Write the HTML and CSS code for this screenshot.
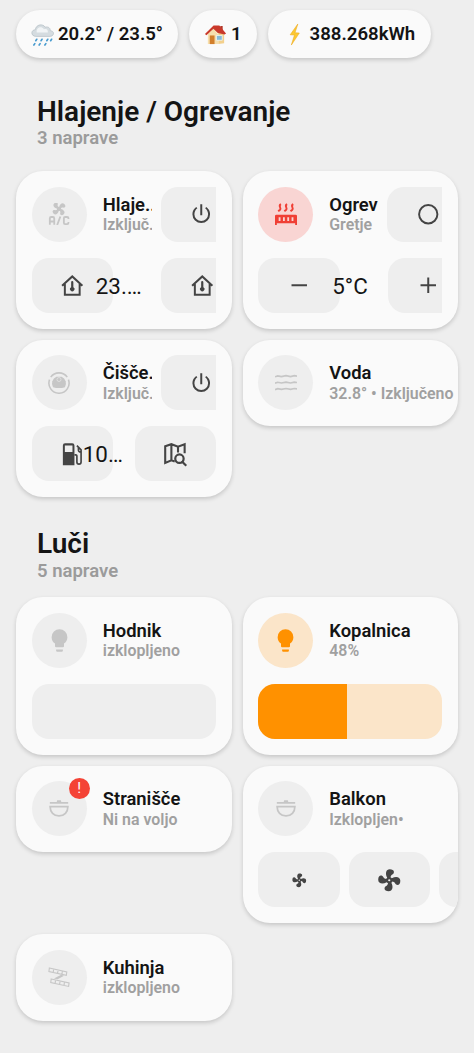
FILE: index.html
```html
<!DOCTYPE html>
<html lang="sl">
<head>
<meta charset="utf-8">
<title>Dom</title>
<link rel="stylesheet" href="styles.css">
</head>
<body>
<svg class="defs" aria-hidden="true">
  <symbol id="power" viewBox="0 0 24 24"><path d="M16.56,5.44L15.51,6.59C16.99,7.74 18.2,9.73 18.2,12A6.2,6.2 0 0,1 12,18.2A6.2,6.2 0 0,1 5.8,12C5.8,9.73 7,7.74 8.48,6.58L7.44,5.44C5.36,6.88 4,9.28 4,12A8,8 0 0,0 12,20A8,8 0 0,0 20,12C20,9.28 18.64,6.88 16.56,5.44M12.9,3H11.1V13H12.9"/></symbol>
  <symbol id="bulb" viewBox="0 0 24 24"><path d="M12,2A7,7 0 0,0 5,9C5,11.38 6.19,13.47 8,14.74V17A1,1 0 0,0 9,18H15A1,1 0 0,0 16,17V14.74C17.81,13.47 19,11.38 19,9A7,7 0 0,0 12,2M9,21A1,1 0 0,0 10,22H14A1,1 0 0,0 15,21V20H9V21Z"/></symbol>
  <symbol id="fan" viewBox="0 0 24 24"><path d="M12,11A1,1 0 0,0 11,12A1,1 0 0,0 12,13A1,1 0 0,0 13,12A1,1 0 0,0 12,11M12.5,2C17,2 17.11,5.57 14.75,6.75C13.76,7.24 13.32,8.29 13.13,9.22C13.61,9.42 14.03,9.73 14.35,10.13C18.05,8.13 22.03,8.92 22.03,12.5C22.03,17 18.46,17.1 17.28,14.73C16.78,13.74 15.72,13.3 14.79,13.11C14.59,13.59 14.28,14 13.88,14.34C15.87,18.03 15.08,22 11.5,22C7,22 6.91,18.42 9.27,17.24C10.25,16.75 10.69,15.71 10.89,14.79C10.4,14.59 9.97,14.27 9.65,13.87C5.96,15.85 2,15.07 2,11.5C2,7 5.56,6.89 6.74,9.26C7.24,10.25 8.29,10.68 9.22,10.87C9.41,10.39 9.73,9.97 10.14,9.65C8.15,5.96 8.94,2 12.5,2Z"/></symbol>
  <symbol id="home" viewBox="0 0 24 24"><path d="M2.8 12.500 12 4l9.200 8.500M5.300 10.800V20.500H18.700V10.800" fill="none" stroke="currentColor" stroke-width="1.800"/><path d="M11 9.200a1 1 0 0 1 2 0v4.500a2 2 0 1 1-2 0z"/></symbol>
  <symbol id="ring" viewBox="0 0 24 24"><circle cx="12" cy="12" r="8.300" fill="none" stroke="currentColor" stroke-width="1.750"/></symbol>
  <symbol id="minus" viewBox="0 0 24 24"><path d="M5 11.100h14v1.800H5z"/></symbol>
  <symbol id="plus" viewBox="0 0 24 24"><path d="M5 11.100h6.100V5h1.800v6.100H19v1.800h-6.100V19h-1.800v-6.100H5z"/></symbol>
  <symbol id="gas" viewBox="0 0 24 24"><path fill-rule="evenodd" d="M5.500 2h6.500a2 2 0 0 1 2 2v18H3.500V4a2 2 0 0 1 2-2zM5.300 4v6h6.900V4z"/><path d="M14 12.500h1.200a1 1 0 0 1 1 1v5.500a1.900 1.900 0 0 0 3.800 0V8L16.200 4.200M17.600 6v2.300a1.500 1.500 0 0 0 2.400 1.200" fill="none" stroke="currentColor" stroke-width="1.500"/></symbol>
  <symbol id="map" viewBox="0 0 24 24"><path d="M11.500 18.500 8.500 17.500 2.900 19.800V4.700L8.500 2.900l6 2.200 6-2.100v8M8.500 3v14.500M14.500 5v5.500" fill="none" stroke="currentColor" stroke-width="1.900"/><path d="m17.800 18.300 4.200 4.200" stroke="currentColor" stroke-width="2"/><circle cx="15.800" cy="16" r="3.800" fill="none" stroke="currentColor" stroke-width="2"/></symbol>
  <symbol id="pot" viewBox="0 0 24 24"><path d="M2 4.300H9.500L10 2.500h4l.5 1.800H22v2H2z"/><path d="M2.300 9.300H21.700C21.700 15.500 17.800 19.500 12 19.500S2.300 15.500 2.300 9.300z" fill="none" stroke="currentColor" stroke-width="1.900"/></symbol>
  <symbol id="ac" viewBox="0 0 24 24"><g transform="translate(2.600 -3) scale(.78)"><path d="M12.500,2C17,2 17.110,5.570 14.750,6.750C13.760,7.240 13.320,8.290 13.130,9.220C13.610,9.420 14.030,9.730 14.350,10.130C18.050,8.130 22.030,8.920 22.030,12.500C22.030,17 18.460,17.100 17.280,14.730C16.780,13.740 15.720,13.300 14.790,13.110C14.590,13.590 14.280,14 13.880,14.340C15.870,18.030 15.080,22 11.500,22C7,22 6.910,18.420 9.270,17.240C10.250,16.750 10.690,15.710 10.890,14.790C10.400,14.590 9.970,14.270 9.650,13.870C5.960,15.850 2,15.070 2,11.500C2,7 5.560,6.890 6.740,9.260C7.240,10.250 8.290,10.680 9.220,10.870C9.410,10.390 9.730,9.970 10.140,9.650C8.150,5.960 8.940,2 12.500,2Z" transform="rotate(45 12 12)"/></g><path d="M2 23.800v-7q0-1.500 1.500-1.500h1.800q1.500 0 1.500 1.500v7M2 20.200h4.800M10 24l3.500-9.300M22.300 17.500v-.8q0-1.400-1.400-1.400h-2.200q-1.400 0-1.400 1.400v4.900q0 1.400 1.400 1.400h2.200q1.400 0 1.400-1.400v-.8" fill="none" stroke="currentColor" stroke-width="2"/></symbol>
  <symbol id="radiator" viewBox="0 0 24 24"><path fill-rule="evenodd" d="M0 14.300q0-1.500 1.500-1.500h21q1.500 0 1.500 1.500V24h-2v-2H2v2H0zM4 15.500v4h2v-4zm4.700 0v4h2v-4zm4.700 0v4h2v-4zm4.700 0v4h2v-4z"/><path d="M6.500 1.200C2.800 3.200 7.500 5 5.500 7.300L3.500 9M13.200 1.200c-3.700 2 1 3.800-1 6.100L10.200 9M19.900 1.200c-3.700 2 1 3.800-1 6.100L16.900 9" fill="none" stroke="currentColor" stroke-width="2.100"/></symbol>
  <symbol id="vacuum" viewBox="0 0 24 24"><path d="M3 5.600a11 11 0 0 1 18 0M22.300 8.300A11 11 0 1 1 1.700 8.300" fill="none" stroke="currentColor" stroke-width="1.700"/><path d="M5.500 16.500a7.800 7.800 0 0 1 3.700-11.300h5.600a7.800 7.800 0 0 1 3.700 11.300q-6.500 2-13 0z"/><circle cx="12" cy="8.200" r="2.200" fill="none" stroke="#eee" stroke-width=".6"/></symbol>
  <symbol id="waves" viewBox="0 0 24 24"><path d="M0 5.200 3 4.200 7 5l5-1 5 1 4-1 3 .5M0 12.200l3-1 4 .8 5-1 5 1 4-1 3 .5M0 19.200l3-1 4 .8 5-1 5 1 4-1 3 .5" fill="none" stroke="currentColor" stroke-width="1.800"/></symbol>
  <symbol id="strip" viewBox="0 0 24 24"><g fill="none" stroke="currentColor" stroke-width="1.200"><path d="M1.500 2.200 20.500 6.400 20 10.200 1 6zM6.200 3.300l-.5 3.800M11 4.300l-.5 3.900M15.700 5.400l-.5 3.800M3.500 14.200l19.500 4.200-.5 3.900L3 18zM8.300 15.200l-.5 3.900M13.200 16.300l-.5 3.800M18 17.300l-.5 3.900"/></g><path d="m14.500 9.500-8 4 4 1 7-4z"/></symbol>
</svg>

<header class="chips">
  <div class="chip">
    <svg class="emoji" viewBox="0 0 24 24"><g fill="#d5dce0" stroke="#a9b5bc" stroke-width=".6"><path d="M5.500 14C-.5 14-.5 7.300 4.500 7 5 1.500 12.500.3 14.700 4.300 18.500 3.300 20.500 6 20 8c5 .2 4.500 6-.5 6z"/></g><path d="M6 10C5 5 10.500 2.500 13.500 6.500 17 5.500 18 8 17.500 10z" fill="#f1f4f6"/><path d="m6 17-1 1.500m6.500-1.500-1 1.500M17.500 17l-1 1.500m5-1.500-1 1.500M4 21.500 3 23m6.500-1.500-1 1.500m7-1.500-1 1.500" stroke="#489bcf" stroke-width="1.700" stroke-linecap="round"/></svg>
    <span>20.2° / 23.5°</span>
  </div>
  <div class="chip">
    <svg class="emoji" viewBox="0 0 24 24"><path d="M4 11 9 5l6 7v10H4z" fill="#f6dfae"/><path d="M9 5h7l5 6v10l-6 1V11z" fill="#f3d08c"/><path d="M6 13h5v9H6z" fill="#d27f2b"/><path d="M13 13h6v5h-6z" fill="#87bcd8" stroke="#fff" stroke-width=".7"/><path d="M17 3h2.500v5L17 6z" fill="#b13b2c"/><path d="M1 11.500 10 2.500h6l7 8.500-1.500 1-7-1.500L9.800 6 2.500 12.800z" fill="#c9392b"/></svg>
    <span>1</span>
  </div>
  <div class="chip">
    <svg class="emoji" viewBox="0 0 24 24"><path d="M15.500 1 7.500 12.300l4.500.2L8.700 23 17 10.500l-4.500-.3z" fill="#fcc931" stroke="#eda91f" stroke-width=".6"/></svg>
    <span>388.268kWh</span>
  </div>
</header>

<main>
  <section class="climate">
    <div class="heading"><h1>Hlajenje / Ogrevanje</h1><p>3 naprave</p></div>
    <div class="grid">
      <article class="card">
        <div class="row"><span class="shape"><svg class="icon"><use href="#ac"/></svg></span>
          <div class="info narrow"><h2>Hlaje...</h2><p>Izključ...</p></div>
          <button class="button"><svg class="icon"><use href="#power"/></svg></button></div>
        <div class="row"><button class="button"><svg class="icon"><use href="#home"/></svg></button><span class="value">23.…</span><button class="button"><svg class="icon"><use href="#home"/></svg></button></div>
      </article>
      <article class="card">
        <div class="row"><span class="shape red"><svg class="icon"><use href="#radiator"/></svg></span>
          <div class="info narrow"><h2>Ogrev</h2><p>Gretje</p></div>
          <button class="button"><svg class="icon"><use href="#ring"/></svg></button></div>
        <div class="row"><button class="button"><svg class="icon"><use href="#minus"/></svg></button><span class="value degrees">5°C</span><button class="button"><svg class="icon"><use href="#plus"/></svg></button></div>
      </article>
      <article class="card">
        <div class="row"><span class="shape"><svg class="icon"><use href="#vacuum"/></svg></span>
          <div class="info narrow"><h2>Čišče...</h2><p>Izključ...</p></div>
          <button class="button"><svg class="icon"><use href="#power"/></svg></button></div>
        <div class="row"><button class="button"><svg class="icon"><use href="#gas"/></svg></button><span class="value battery">10…</span><button class="button"><svg class="icon"><use href="#map"/></svg></button></div>
      </article>
      <article class="card">
        <div class="row open"><span class="shape"><svg class="icon"><use href="#waves"/></svg></span>
          <div class="info"><h2>Voda</h2><p>32.8° • Izključeno</p></div></div>
      </article>
    </div>
  </section>

  <section class="lights">
    <div class="heading"><h1>Luči</h1><p>5 naprave</p></div>
    <div class="grid">
      <article class="card">
        <div class="row"><span class="shape bulb"><svg class="icon"><use href="#bulb"/></svg></span>
          <div class="info"><h2>Hodnik</h2><p>izklopljeno</p></div></div>
        <div class="slider"></div>
      </article>
      <article class="card">
        <div class="row"><span class="shape bulb orange"><svg class="icon"><use href="#bulb"/></svg></span>
          <div class="info"><h2>Kopalnica</h2><p>48%</p></div></div>
        <div class="slider lit"><div class="fill" style="width:48%"></div></div>
      </article>
      <article class="card">
        <div class="row open"><span class="shape"><svg class="icon"><use href="#pot"/></svg><span class="badge">!</span></span>
          <div class="info"><h2>Stranišče</h2><p>Ni na voljo</p></div></div>
      </article>
      <article class="card clipped">
        <div class="row"><span class="shape"><svg class="icon"><use href="#pot"/></svg></span>
          <div class="info"><h2>Balkon</h2><p>Izklopljen•</p></div></div>
        <div class="row open spaced"><button class="button"><svg class="icon small"><use href="#fan"/></svg></button><button class="button"><svg class="icon"><use href="#fan"/></svg></button><button class="button"></button></div>
      </article>
      <article class="card">
        <div class="row"><span class="shape"><svg class="icon"><use href="#strip"/></svg></span>
          <div class="info"><h2>Kuhinja</h2><p>izklopljeno</p></div></div>
      </article>
    </div>
  </section>
</main>
</body>
</html>
```
FILE: styles.css
```css
* { box-sizing: border-box; }
body {
  margin: 0;
  padding: 10px 16px 0;
  height: 1053px;
  overflow: hidden;
  background: #eee;
  color: #141414;
  font-family: Roboto, "Noto Sans", sans-serif;
}
h1, h2, p { margin: 0; white-space: nowrap; }
.defs { position: absolute; width: 0; height: 0; }
.chips { display: flex; gap: 10.500px; height: 48px; }
.chip {
  display: flex;
  align-items: center;
  gap: 4px;
  height: 48px;
  padding: 0 15.500px 0 15px;
  border-radius: 24px;
  background: #fafafa;
  box-shadow: 0 2px 4px rgba(0, 0, 0, .17);
  font-size: 18.600px;
  font-weight: 600;
  white-space: nowrap;
}
.emoji { width: 23px; height: 23px; flex: none; }
.heading { padding-left: 21px; }
.climate .heading { height: 113px; padding-top: 36px; }
.climate .heading h1 { line-height: 35px; }
.lights .heading { height: 100px; padding-top: 29px; }
.heading h1 { font-size: 28px; line-height: 36px; font-weight: 600; }
.heading p { font-size: 18.500px; line-height: 18px; font-weight: 600; color: #9b9b9b; }
.grid {
  display: grid;
  grid-template-columns: 215.500px 215.500px;
  gap: 11px;
  align-items: start;
}
.card {
  display: flex;
  flex-direction: column;
  gap: 16px;
  padding: 15.750px;
  border-radius: 27px;
  background: #fafafa;
  box-shadow: 0 2px 4px rgba(0, 0, 0, .17);
}
.clipped { overflow: hidden; }
.row { display: flex; align-items: center; height: 55px; overflow: hidden; }
.row.open { overflow: visible; }
.spaced { gap: 9px; }
.shape {
  position: relative;
  display: flex;
  align-items: center;
  justify-content: center;
  flex: none;
  width: 55px;
  height: 55px;
  margin-right: 16px;
  border-radius: 50%;
  background: #eee;
  color: #c6c6c6;
}
.shape .icon { width: 22px; height: 22px; }
.shape.bulb .icon { width: 27px; height: 27px; }
.shape.red { background: #f9d5d3; color: #f03f35; }
.shape.orange { background: #fbe5c9; color: #ff9100; }
.icon { width: 26.500px; height: 26.500px; fill: currentColor; display: block; overflow: visible; }
.icon.small { width: 16.500px; height: 16.500px; }
.info { padding-top: 1px; }
.info h2 { font-size: 18.400px; line-height: 20.500px; font-weight: 600; }
.info p { font-size: 15.900px; line-height: 20px; font-weight: 600; color: #a0a0a0; }
.narrow { flex: none; width: 49px; margin-right: 9px; overflow: hidden; }
.button {
  display: flex;
  align-items: center;
  justify-content: center;
  flex: none;
  width: 81.500px;
  height: 55px;
  padding: 0;
  border: 0;
  border-radius: 17px;
  background: #eee;
  color: #444;
}
.value {
  flex: none;
  width: 65.500px;
  margin-left: -17.500px;
  padding-top: 1px;
  font-size: 22.400px;
  line-height: 28px;
  white-space: nowrap;
}
.degrees { padding-left: 10px; }
.battery { width: 52px; margin-left: -30.500px; }
.slider { height: 55px; border-radius: 17px; background: #eee; overflow: hidden; }
.slider.lit { background: #fbe5c9; }
.fill { height: 100%; background: #ff9100; }
.badge {
  position: absolute;
  top: -3px;
  right: -3px;
  width: 21px;
  height: 21px;
  border-radius: 50%;
  background: #f44336;
  color: #fff;
  font-size: 15px;
  line-height: 21px;
  text-align: center;
}
```
